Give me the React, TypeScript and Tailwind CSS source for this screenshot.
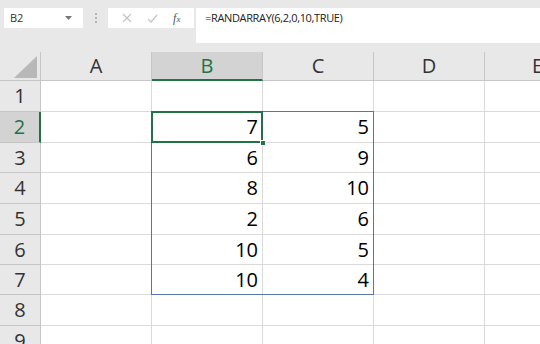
import React from 'react';

const font = { fontFamily: '"Open Sans", "Noto Sans", Arial, sans-serif' };

const cols = ['A', 'B', 'C', 'D', 'E'];

// row heights in px incl. bottom grid line
const rows = [
  { n: 1, h: 'h-[31px]', b: '', c: '' },
  { n: 2, h: 'h-[31px]', b: '7', c: '5' },
  { n: 3, h: 'h-[30px]', b: '6', c: '9' },
  { n: 4, h: 'h-[31px]', b: '8', c: '10' },
  { n: 5, h: 'h-[31px]', b: '2', c: '6' },
  { n: 6, h: 'h-[30px]', b: '10', c: '5' },
  { n: 7, h: 'h-[30px]', b: '10', c: '4' },
  { n: 8, h: 'h-[31px]', b: '', c: '' },
  { n: 9, h: 'h-[31px]', b: '', c: '' },
];

function Toolbar() {
  return (
    <div className="h-[52px] bg-[#e8e8e8] flex items-start pt-2 pl-1">
      {/* Name box */}
      <div className="w-[79px] h-[20px] bg-white flex items-center justify-between pl-[6px] pr-[11px] text-[11px] text-[#333]">
        <span>B2</span>
        <svg width="7" height="4" viewBox="0 0 7 4">
          <path d="M0 0h7L3.5 4z" fill="#777" />
        </svg>
      </div>
      {/* separator dots */}
      <div className="w-[25px] h-[20px] flex flex-col items-center justify-center gap-[2px]">
        <span className="w-[2px] h-[2px] bg-[#b5b5b5]" />
        <span className="w-[2px] h-[2px] bg-[#b5b5b5]" />
        <span className="w-[2px] h-[2px] bg-[#b5b5b5]" />
      </div>
      {/* cancel / enter / fx */}
      <div className="w-[86px] h-[20px] bg-white flex items-center justify-around px-[6px]">
        <svg width="10" height="10" viewBox="0 0 10 10">
          <path d="M1 1l8 8M9 1l-8 8" stroke="#c4c4c4" strokeWidth="1.2" />
        </svg>
        <svg width="11" height="9" viewBox="0 0 11 9">
          <path d="M1 5l3 3 6-7" stroke="#c4c4c4" strokeWidth="1.2" fill="none" />
        </svg>
        <span className="text-[12px] italic text-[#555]" style={{ fontFamily: '"Liberation Serif", serif' }}>
          f<span className="text-[9px]">x</span>
        </span>
      </div>
      {/* formula bar */}
      <div className="ml-[2px] flex-1 h-[35px] bg-white pl-[9px] pt-[2px] text-[11px] text-[#222] tracking-[-0.35px]">
        =RANDARRAY(6,2,0,10,TRUE)
      </div>
    </div>
  );
}

function HeaderRow() {
  return (
    <div className="flex h-[29px] bg-[#e8e8e8] border-b border-[#c6c6c6]">
      <div className="w-[41px] shrink-0 border-r border-[#c6c6c6] relative">
        <svg className="absolute right-[3px] bottom-[2px]" width="23" height="22" viewBox="0 0 23 22">
          <path d="M23 0V22H0z" fill="#b8b8b8" />
        </svg>
      </div>
      {cols.map((c) => (
        <div
          key={c}
          className={
            c === 'B'
              ? 'w-[111px] shrink-0 flex items-center justify-center text-[20px] text-[#217346] bg-[#d3d3d3] border-r border-[#c6c6c6] border-b-2 border-b-[#217346] -mb-px'
              : c === 'E'
              ? 'flex-1 flex items-center justify-start pl-[47px] text-[20px] text-[#333]'
              : 'w-[111px] shrink-0 flex items-center justify-center text-[20px] text-[#333] border-r border-[#c6c6c6]'
          }
        >
          {c}
        </div>
      ))}
    </div>
  );
}

export default function App() {
  return (
    <div className="w-[540px] h-[344px] overflow-hidden bg-white relative" style={font}>
      <Toolbar />
      <HeaderRow />
      <div className="relative">
        {rows.map((r) => (
          <div key={r.n} className={`flex ${r.h}`}>
            <div
              className={
                r.n === 2
                  ? 'w-[41px] shrink-0 flex items-center justify-center text-[20px] text-[#217346] bg-[#d3d3d3] border-b border-[#c6c6c6] border-r-2 border-r-[#217346]'
                  : 'w-[41px] shrink-0 flex items-center justify-center text-[20px] text-[#333] bg-[#e8e8e8] border-b border-[#c6c6c6] border-r border-r-[#c6c6c6]'
              }
            >
              {r.n}
            </div>
            <div className="w-[111px] shrink-0 border-r border-b border-[#dadada]" />
            <div className="w-[111px] shrink-0 border-r border-b border-[#dadada] flex items-center justify-end pr-[4px] text-[20px] text-black">
              {r.b}
            </div>
            <div className="w-[111px] shrink-0 border-r border-b border-[#dadada] flex items-center justify-end pr-[4px] text-[20px] text-black">
              {r.c}
            </div>
            <div className="w-[111px] shrink-0 border-r border-b border-[#dadada]" />
            <div className="flex-1 border-b border-[#dadada]" />
          </div>
        ))}

        {/* spill range border B2:C7 */}
        <div className="absolute left-[151px] top-[30px] w-[223px] h-[184px] border border-[#5874a6] pointer-events-none" />
        {/* active cell B2 */}
        <div className="absolute left-[151px] top-[30px] w-[112px] h-[32px] border-2 border-[#217346] pointer-events-none" />
        {/* fill handle */}
        <div className="absolute left-[260px] top-[59px] w-[6px] h-[6px] bg-[#217346] border border-white" />
      </div>
    </div>
  );
}
